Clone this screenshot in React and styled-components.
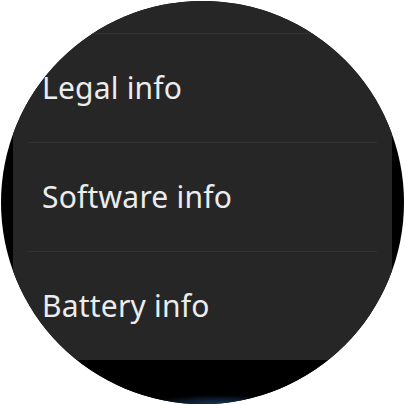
import React from "react"
import styled, { createGlobalStyle } from "styled-components"

const GlobalStyle = createGlobalStyle`
  html, body {
    margin: 0;
    padding: 0;
    background: #ffffff;
  }
  body {
    font-family: "Noto Sans", "Open Sans", sans-serif;
  }
`

// first entry is the row scrolled off the top, only its bottom edge shows
const items = ["", "Legal info", "Software info", "Battery info"]

const Screen = styled.div`
  width: 405px;
  height: 405px;
  display: flex;
  align-items: center;
  justify-content: center;
`

const Watch = styled.div`
  width: 403px;
  height: 403px;
  border-radius: 50%;
  overflow: hidden;
  background: #000;
  display: flex;
  flex-direction: column;
`

const List = styled.ul`
  list-style: none;
  margin: -77px 12px 0;
  padding: 0;
  background: #262626;
`

const Row = styled.li`
  height: 109px;
  display: flex;
  align-items: center;
  padding: 0 29px;
  box-sizing: border-box;
  border-top: ${p => (p.first ? "none" : "1px solid #323232")};
  border-image: ${p =>
    p.first
      ? "none"
      : "linear-gradient(to right, #262626 16px, #323232 16px, #323232 calc(100% - 16px), #262626 calc(100% - 16px)) 1"};
`

const Label = styled.span`
  color: #ececec;
  font-size: 30px;
  letter-spacing: 0.2px;
  line-height: 1;
`

const Footer = styled.div`
  flex: 1;
  background: radial-gradient(ellipse 70px 9px at 54% 100%, #143454 0%, #0b1d30 50%, #000 100%);
`

export default function App() {
  return (
    <>
      <GlobalStyle />
      <Screen>
        <Watch>
          <List>
            {items.map((t, i) => (
              <Row key={i} first={i === 0}>
                {t && <Label>{t}</Label>}
              </Row>
            ))}
          </List>
          <Footer />
        </Watch>
      </Screen>
    </>
  )
}
